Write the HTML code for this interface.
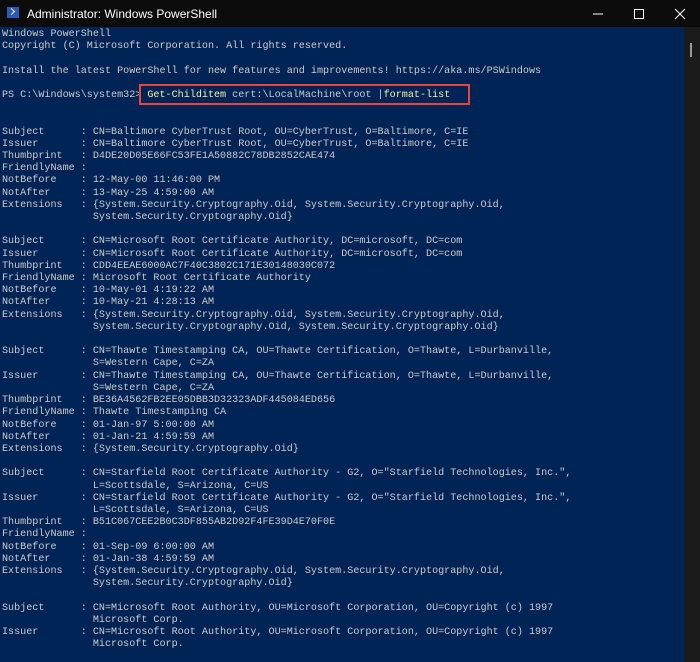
<!DOCTYPE html>
<html><head><meta charset="utf-8"><style>
html,body{margin:0;padding:0;}
body{width:700px;height:662px;overflow:hidden;background:#012456;position:relative;font-family:"Liberation Mono",monospace;}
#title{position:absolute;left:0;top:0;width:700px;height:27px;background:#0c0c0c;color:#fff;font-family:"Liberation Sans",sans-serif;font-size:12px;}
#title .t{position:absolute;left:27px;top:7px;}
#title .ic{position:absolute;left:7px;top:7px;width:12px;height:11px;background:#2a5bb8;}
#title .ic:after{content:"";position:absolute;left:2px;top:2px;width:4px;height:4px;border-right:1.5px solid #fff;border-bottom:1.5px solid #fff;transform:rotate(-45deg);}
#scroll{position:absolute;left:684px;top:27px;width:16px;height:635px;background:#1b1b1b;}
#thumb{position:absolute;left:690px;top:43px;width:2px;height:14px;background:#9a9a9a;}
pre{position:absolute;left:2px;top:29px;margin:0;font-family:"Liberation Mono",monospace;font-size:10.1px;line-height:12.2px;color:#cccccc;}
.y{color:#f9f1a5;}
#box{position:absolute;left:139px;top:84px;width:331px;height:21px;border:2px solid #e8453c;box-sizing:border-box;}
</style></head><body>
<div id="title"><div class="ic"></div><span class="t">Administrator: Windows PowerShell</span>
<svg style="position:absolute;left:590px;top:8px" width="100" height="12"><line x1="3" y1="6" x2="13" y2="6" stroke="#fff" stroke-width="1"/><rect x="44.5" y="1.5" width="9" height="9" fill="none" stroke="#fff"/><path d="M85 1 L95 11 M95 1 L85 11" stroke="#fff"/></svg>
</div>
<div id="scroll"></div><div id="thumb"></div>
<pre>Windows PowerShell
Copyright (C) Microsoft Corporation. All rights reserved.

Install the latest PowerShell for new features and improvements! https://aka.ms/PSWindows

PS C:\Windows\system32&gt; <span class="y">Get-Childitem</span> cert:\LocalMachine\root |<span class="y">format-list</span>


Subject      : CN=Baltimore CyberTrust Root, OU=CyberTrust, O=Baltimore, C=IE
Issuer       : CN=Baltimore CyberTrust Root, OU=CyberTrust, O=Baltimore, C=IE
Thumbprint   : D4DE20D05E66FC53FE1A50882C78DB2852CAE474
FriendlyName :
NotBefore    : 12-May-00 11:46:00 PM
NotAfter     : 13-May-25 4:59:00 AM
Extensions   : {System.Security.Cryptography.Oid, System.Security.Cryptography.Oid,
               System.Security.Cryptography.Oid}

Subject      : CN=Microsoft Root Certificate Authority, DC=microsoft, DC=com
Issuer       : CN=Microsoft Root Certificate Authority, DC=microsoft, DC=com
Thumbprint   : CDD4EEAE6000AC7F40C3802C171E30148030C072
FriendlyName : Microsoft Root Certificate Authority
NotBefore    : 10-May-01 4:19:22 AM
NotAfter     : 10-May-21 4:28:13 AM
Extensions   : {System.Security.Cryptography.Oid, System.Security.Cryptography.Oid,
               System.Security.Cryptography.Oid, System.Security.Cryptography.Oid}

Subject      : CN=Thawte Timestamping CA, OU=Thawte Certification, O=Thawte, L=Durbanville,
               S=Western Cape, C=ZA
Issuer       : CN=Thawte Timestamping CA, OU=Thawte Certification, O=Thawte, L=Durbanville,
               S=Western Cape, C=ZA
Thumbprint   : BE36A4562FB2EE05DBB3D32323ADF445084ED656
FriendlyName : Thawte Timestamping CA
NotBefore    : 01-Jan-97 5:00:00 AM
NotAfter     : 01-Jan-21 4:59:59 AM
Extensions   : {System.Security.Cryptography.Oid}

Subject      : CN=Starfield Root Certificate Authority - G2, O="Starfield Technologies, Inc.",
               L=Scottsdale, S=Arizona, C=US
Issuer       : CN=Starfield Root Certificate Authority - G2, O="Starfield Technologies, Inc.",
               L=Scottsdale, S=Arizona, C=US
Thumbprint   : B51C067CEE2B0C3DF855AB2D92F4FE39D4E70F0E
FriendlyName :
NotBefore    : 01-Sep-09 6:00:00 AM
NotAfter     : 01-Jan-38 4:59:59 AM
Extensions   : {System.Security.Cryptography.Oid, System.Security.Cryptography.Oid,
               System.Security.Cryptography.Oid}

Subject      : CN=Microsoft Root Authority, OU=Microsoft Corporation, OU=Copyright (c) 1997
               Microsoft Corp.
Issuer       : CN=Microsoft Root Authority, OU=Microsoft Corporation, OU=Copyright (c) 1997
               Microsoft Corp.</pre>
<div id="box"></div>
</body></html>
